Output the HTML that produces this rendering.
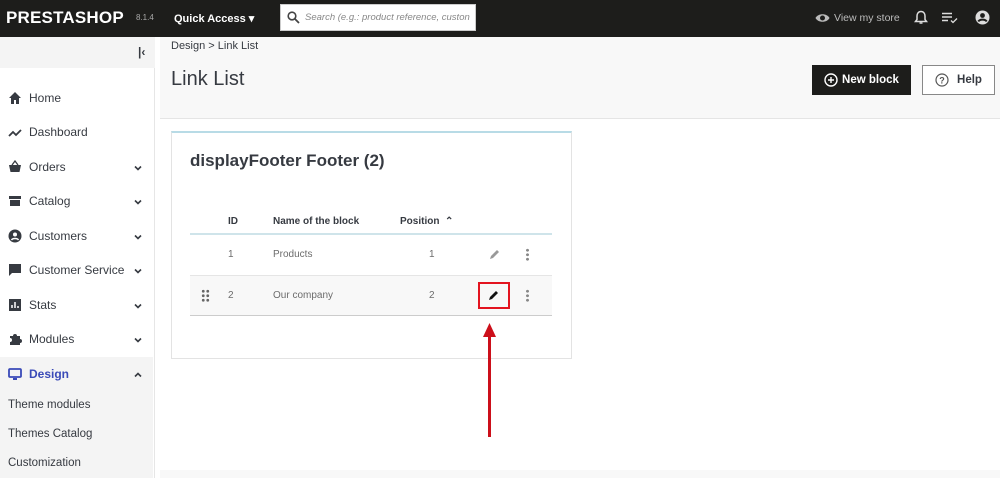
<!DOCTYPE html>
<html><head><meta charset="utf-8"><style>
*{box-sizing:border-box;margin:0;padding:0}
body{width:1000px;height:478px;overflow:hidden;font-family:"Liberation Sans",sans-serif;background:#fff;position:relative;color:#363a41}
.top{position:absolute;left:0;top:0;width:1000px;height:37px;background:#1d1d1b;color:#fff}
.abs{position:absolute}
.side{position:absolute;left:0;top:37px;width:155px;height:441px;background:#fff;border-right:1px solid #e6e6e6}
.item{position:absolute;left:8px;font-size:12px;color:#363a41;display:flex;align-items:center}
.item svg{width:14px;height:14px;margin-right:7px}
.chev{position:absolute;left:133px;width:10px;height:10px}
.sub{position:absolute;left:8px;font-size:11.5px;color:#363a41}
.th{position:absolute;font-size:10px;font-weight:bold;color:#363a41}
.td{position:absolute;font-size:10px;color:#6c6c6c}
</style></head><body>
<div class="top">
 <div class="abs" style="left:6px;top:8px;font-size:17px;font-weight:bold;letter-spacing:0.2px">PRESTASHOP</div>
 <div class="abs" style="left:136px;top:13px;font-size:8px;color:#aaa">8.1.4</div>
 <div class="abs" style="left:174px;top:12px;font-size:11px;font-weight:bold">Quick Access ▾</div>
 <div class="abs" style="left:280px;top:4px;width:196px;height:27px;background:#fff;border:1px solid #ccc"></div>
 <svg class="abs" style="left:287px;top:11px" width="13" height="13" viewBox="0 0 13 13"><circle cx="5" cy="5" r="3.8" fill="none" stroke="#444" stroke-width="1.6"/><path d="M8 8l4 4" stroke="#444" stroke-width="1.8"/></svg>
 <div class="abs" style="left:305px;top:12px;font-size:9.5px;font-style:italic;color:#888;white-space:nowrap;width:170px;overflow:hidden">Search (e.g.: product reference, custon</div>
 <svg class="abs" style="left:815px;top:12px" width="15" height="12" viewBox="0 0 15 12"><path d="M0.5 6C3 1 12 1 14.5 6 12 11 3 11 0.5 6z" fill="#bbb"/><circle cx="7.5" cy="6" r="2.5" fill="#1d1d1b"/></svg>
 <div class="abs" style="left:834px;top:12px;font-size:10.5px;color:#bbb">View my store</div>
 <svg class="abs" style="left:914px;top:10px" width="14" height="15" viewBox="0 0 14 15"><path d="M7 1.5c2.5 0 4 2 4 4.5v3.5l1.5 2H1.5L3 9.5V6c0-2.5 1.5-4.5 4-4.5z" fill="none" stroke="#ddd" stroke-width="1.5"/><path d="M5.5 13h3" stroke="#ddd" stroke-width="1.5"/></svg>
 <svg class="abs" style="left:942px;top:12px" width="16" height="12" viewBox="0 0 16 12"><path d="M0 1.5h10M0 5h10M0 8.5h6" stroke="#ddd" stroke-width="1.4"/><path d="M9 8.5l2 2 4-4" stroke="#ddd" stroke-width="1.3" fill="none"/></svg>
 <svg class="abs" style="left:975px;top:10px" width="15" height="15" viewBox="0 0 15 15"><circle cx="7.5" cy="7.5" r="7" fill="#ddd"/><circle cx="7.5" cy="5.5" r="2.4" fill="#1d1d1b"/><path d="M3.3 11.5c1.5-2.5 7-2.5 8.4 0" stroke="#1d1d1b" stroke-width="2" fill="none"/></svg>
</div>
<div class="side">
 <div class="abs" style="left:0;top:0;width:155px;height:31px;background:#f4f4f4"></div>
 <div class="abs" style="left:138px;top:8px;font-size:12px;font-weight:bold">|&lsaquo;</div>
 <div class="abs" style="left:0;top:320px;width:153px;height:121px;background:#f4f4f4"></div>
</div>
<div class="item" style="top:91px"><svg viewBox="0 0 14 14"><path d="M7 1L1 7h2v6h3V9h2v4h3V7h2z" fill="#363a41"/></svg>Home</div>
<div class="item" style="top:125px"><svg viewBox="0 0 14 14"><path d="M1 11l4-4 3 3 5-5" stroke="#363a41" stroke-width="1.8" fill="none"/></svg>Dashboard</div>
<div class="item" style="top:160px"><svg viewBox="0 0 14 14"><path d="M1 5h12l-1.5 7h-9z" fill="#363a41"/><path d="M4 5l3-4 3 4" stroke="#363a41" fill="none" stroke-width="1.3"/></svg>Orders</div>
<div class="item" style="top:194px"><svg viewBox="0 0 14 14"><path d="M1 2h12v3H1zM2 6h10v6H2z" fill="#363a41"/></svg>Catalog</div>
<div class="item" style="top:229px"><svg viewBox="0 0 14 14"><circle cx="7" cy="7" r="6.5" fill="#363a41"/><circle cx="7" cy="5.5" r="2" fill="#fff"/><path d="M3.5 11c1-2 6-2 7 0" stroke="#fff" stroke-width="1.5" fill="none"/></svg>Customers</div>
<div class="item" style="top:263px"><svg viewBox="0 0 14 14"><path d="M1 1h12v9H4l-3 3z" fill="#363a41"/></svg>Customer Service</div>
<div class="item" style="top:298px"><svg viewBox="0 0 14 14"><rect x="1" y="1" width="12" height="12" fill="#363a41"/><path d="M4 10V7M7 10V4M10 10V8" stroke="#fff" stroke-width="1.5"/></svg>Stats</div>
<div class="item" style="top:332px"><svg viewBox="0 0 14 14"><path d="M2 4h3a2 2 0 1 1 4 0h3v3a2 2 0 1 1 0 4v2H2v-3a2 2 0 1 0 0-4z" fill="#363a41"/></svg>Modules</div>
<div class="item" style="top:367px;color:#25b9d7;color:#3a4ab8;font-weight:bold"><svg viewBox="0 0 14 14"><rect x="1" y="2" width="12" height="8" rx="1" fill="none" stroke="#3a4ab8" stroke-width="1.8"/><path d="M5 12h4" stroke="#3a4ab8" stroke-width="2"/></svg>Design</div>
<svg class="chev" style="top:163px" viewBox="0 0 10 10"><path d="M2 3.5l3 3 3-3" stroke="#363a41" stroke-width="1.6" fill="none"/></svg>
<svg class="chev" style="top:197px" viewBox="0 0 10 10"><path d="M2 3.5l3 3 3-3" stroke="#363a41" stroke-width="1.6" fill="none"/></svg>
<svg class="chev" style="top:232px" viewBox="0 0 10 10"><path d="M2 3.5l3 3 3-3" stroke="#363a41" stroke-width="1.6" fill="none"/></svg>
<svg class="chev" style="top:266px" viewBox="0 0 10 10"><path d="M2 3.5l3 3 3-3" stroke="#363a41" stroke-width="1.6" fill="none"/></svg>
<svg class="chev" style="top:301px" viewBox="0 0 10 10"><path d="M2 3.5l3 3 3-3" stroke="#363a41" stroke-width="1.6" fill="none"/></svg>
<svg class="chev" style="top:335px" viewBox="0 0 10 10"><path d="M2 3.5l3 3 3-3" stroke="#363a41" stroke-width="1.6" fill="none"/></svg>
<svg class="chev" style="top:370px" viewBox="0 0 10 10"><path d="M2 6.5l3-3 3 3" stroke="#363a41" stroke-width="1.6" fill="none"/></svg>
<div class="sub" style="top:399px">Theme modules</div>
<div class="sub" style="top:428px">Themes Catalog</div>
<div class="sub" style="top:457px">Customization</div>

<div class="abs" style="left:160px;top:37px;width:840px;height:82px;background:#f8f8f8;border-bottom:1px solid #e5e5e5"></div>
<div class="abs" style="left:171px;top:40px;font-size:11px;color:#363a41">Design &gt; Link List</div>
<div class="abs" style="left:171px;top:68px;font-size:20px;color:#363a41">Link List</div>
<div class="abs" style="left:812px;top:65px;width:99px;height:30px;background:#1d1d1b;color:#fff;font-size:11.5px;font-weight:bold;display:flex;align-items:center;justify-content:center"><svg width="14" height="14" viewBox="0 0 14 14" style="margin-right:4px"><circle cx="7" cy="7" r="6" fill="none" stroke="#fff" stroke-width="1.4"/><path d="M7 4v6M4 7h6" stroke="#fff" stroke-width="1.4"/></svg>New block</div>
<div class="abs" style="left:922px;top:65px;width:73px;height:30px;background:#fff;border:1px solid #888;color:#363a41;font-size:11.5px;font-weight:bold;display:flex;align-items:center;justify-content:center"><svg width="14" height="14" viewBox="0 0 14 14" style="margin-right:8px"><circle cx="7" cy="7" r="6" fill="none" stroke="#555" stroke-width="1.2"/><text x="7" y="10.5" font-size="9" text-anchor="middle" fill="#555" font-family="Liberation Sans">?</text></svg>Help</div>
<div class="abs" style="left:160px;top:470px;width:840px;height:8px;background:#f8f8f8"></div>

<div class="abs" style="left:171px;top:131px;width:401px;height:228px;border:1px solid #e3e3e3;border-top:2px solid #b8dbe6;background:#fff"></div>
<div class="abs" style="left:190px;top:151px;font-size:17px;font-weight:bold;color:#363a41">displayFooter Footer (2)</div>
<div class="th" style="left:228px;top:216px">ID</div>
<div class="th" style="left:273px;top:216px">Name of the block</div>
<div class="th" style="left:400px;top:216px">Position &nbsp;&#8963;</div>
<div class="abs" style="left:190px;top:233px;width:362px;height:2px;background:#cfe4ea"></div>
<div class="td" style="left:228px;top:249px">1</div>
<div class="td" style="left:273px;top:249px">Products</div>
<div class="td" style="left:429px;top:249px">1</div>
<svg class="abs" style="left:489px;top:248px" width="12" height="12" viewBox="0 0 12 12"><path d="M1 11l1-3 6-6 2 2-6 6z" fill="#999"/></svg>
<div class="abs" style="left:526px;top:248px;width:3px;height:13px;background:radial-gradient(circle,#888 1.3px,transparent 1.6px) 0 0/3px 4.5px"></div>
<div class="abs" style="left:190px;top:275px;width:362px;height:41px;background:#f8f8f8;border-top:1px solid #e5e5e5;border-bottom:1px solid #ccc"></div>
<div class="abs" style="left:201px;top:289px;width:9px;height:13px;background:radial-gradient(circle,#666 1.3px,transparent 1.6px) 0 0/4.5px 4.5px"></div>
<div class="td" style="left:228px;top:290px">2</div>
<div class="td" style="left:273px;top:290px">Our company</div>
<div class="td" style="left:429px;top:290px">2</div>
<div class="abs" style="left:478px;top:282px;width:32px;height:27px;border:2.5px solid #e3141f"></div>
<svg class="abs" style="left:488px;top:289px" width="12" height="12" viewBox="0 0 12 12"><path d="M1 11l1-3 6-6 2 2-6 6z" fill="#111"/></svg>
<div class="abs" style="left:526px;top:289px;width:3px;height:13px;background:radial-gradient(circle,#888 1.3px,transparent 1.6px) 0 0/3px 4.5px"></div>
<div class="abs" style="left:488px;top:330px;width:3px;height:107px;background:#cc0f1a"></div>
<svg class="abs" style="left:483px;top:323px" width="13" height="14" viewBox="0 0 13 14"><path d="M6.5 0L13 14H0z" fill="#cc0f1a"/></svg>
</body></html>
